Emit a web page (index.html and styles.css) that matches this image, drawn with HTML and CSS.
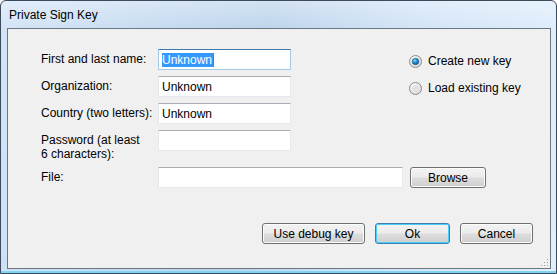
FILE: index.html
```html
<!DOCTYPE html>
<html>
<head>
  <meta charset="UTF-8">
  <title>Private Sign Key</title>
  <link rel="stylesheet" href="styles.css">
</head>
<body>
  <div class="window">
    <div class="titlebar"><span class="title">Private Sign Key</span></div>
    <div class="client">
      <div class="form">
        <div class="lbl">First and last name:</div>
        <div class="textbox focus"><span class="sel">Unknown</span></div>
        <div></div>
        <label class="radio">
          <svg width="13" height="13" viewBox="0 0 13 13">
            <defs>
              <radialGradient id="ring" cx="0.35" cy="0.3" r="0.8">
                <stop offset="0" stop-color="#ffffff"/>
                <stop offset="1" stop-color="#d6d6d6"/>
              </radialGradient>
              <radialGradient id="dot" cx="0.4" cy="0.35" r="0.7">
                <stop offset="0" stop-color="#8fd4ff"/>
                <stop offset="0.5" stop-color="#1b8ad0"/>
                <stop offset="1" stop-color="#0a4f8a"/>
              </radialGradient>
            </defs>
            <circle cx="6.5" cy="6.5" r="6" fill="url(#ring)" stroke="#8a8a8a"/>
            <circle cx="6.5" cy="6.5" r="3.3" fill="url(#dot)" stroke="#2a5d86" stroke-width="0.6"/>
          </svg>
          <span>Create new key</span>
        </label>

        <div class="lbl">Organization:</div>
        <div class="textbox">Unknown</div>
        <div></div>
        <label class="radio">
          <svg width="13" height="13" viewBox="0 0 13 13">
            <circle cx="6.5" cy="6.5" r="6" fill="url(#ring)" stroke="#8a8a8a"/>
            <circle cx="6.5" cy="6.5" r="3.5" fill="#e2e2e2"/>
          </svg>
          <span>Load existing key</span>
        </label>

        <div class="lbl">Country (two letters):</div>
        <div class="textbox">Unknown</div>
        <div></div>
        <div></div>

        <div class="lbl">Password (at least<br>6 characters):</div>
        <div class="textbox"></div>
        <div></div>
        <div></div>

        <div class="lbl">File:</div>
        <div class="textbox wide"></div>
        <div></div>
        <div><button class="btn browse">Browse</button></div>
      </div>

      <div class="actions">
        <button class="btn debug">Use debug key</button>
        <button class="btn ok">Ok</button>
        <button class="btn cancel">Cancel</button>
      </div>

      <svg class="grip" width="10" height="10" viewBox="0 0 10 10">
        <rect x="8" y="2" width="1" height="1" fill="#a0a0a0"/>
        <rect x="5" y="5" width="1" height="1" fill="#a0a0a0"/>
        <rect x="8" y="5" width="1" height="1" fill="#a0a0a0"/>
        <rect x="2" y="8" width="1" height="1" fill="#a0a0a0"/>
        <rect x="5" y="8" width="1" height="1" fill="#a0a0a0"/>
        <rect x="8" y="8" width="1" height="1" fill="#a0a0a0"/>
      </svg>
    </div>
  </div>
</body>
</html>
```

FILE: styles.css
```css
:root {
  --client-bg: #f0f0f0; --frame-dark: #3c4b5c; --text: #000000;
  --field-border: #abadb3; --field-edge: #e3e9ef;
}
html, body { margin: 0; padding: 0; }
body {
  width: 557px; height: 274px; overflow: hidden; background: #ffffff;
  font-family: "Liberation Sans", Arial, sans-serif; font-size: 12px; color: var(--text);
}
.window {
  box-sizing: border-box; width: 557px; height: 274px; display: flex; flex-direction: column;
  border: 1px solid var(--frame-dark); border-radius: 6px 6px 0 0;
  background:
    linear-gradient(180deg, rgba(255,255,255,0.35) 0, rgba(255,255,255,0) 30px),
    linear-gradient(100deg, #d3e4f6 0%, #c5dbf1 25%, #bcd3ec 45%, #d2e4f7 70%, #e1eefb 100%);
  box-shadow: inset 0 -2px 0 #7fd3f3;
}
.titlebar { height: 27px; display: flex; align-items: center; padding-left: 8px; }
.title { font-size: 12px; color: #000; padding-top: 1px; }
.client {
  position: relative; flex: 1; display: flex; flex-direction: column;
  margin: 0 5px 4px 6px; background: var(--client-bg); border: 1px solid #6d7782;
}
.form {
  display: grid; grid-template-columns: 117px 245px 6px 1fr;
  grid-template-rows: 21px 21px 21px 31px 21px; row-gap: 6px;
  padding: 20px 0 0 33px;
}
.lbl { line-height: 14px; padding-top: 3px; white-space: nowrap; }
.textbox {
  box-sizing: border-box; width: 133px; height: 21px; padding: 1px 3px 0; line-height: 18px;
  background: #ffffff; border: 1px solid var(--field-edge); border-top-color: var(--field-border);
}
.textbox.wide { width: 245px; }
.textbox.focus { border-color: #a4c9e3; border-top-color: #3d7bad; }
.sel { background: #3399ff; color: #ffffff; padding-right: 1px; border-right: 1px solid #c0601a; }
.radio { display: flex; align-items: center; gap: 6px; height: 21px; padding-top: 3px; box-sizing: border-box; }
.radio svg { flex-shrink: 0; }
.actions {
  display: flex; justify-content: flex-end; gap: 10px;
  margin-top: auto; padding: 0 17px 24px 0;
}
.btn {
  box-sizing: border-box; height: 21px; padding: 0; margin: 0;
  font-family: "Liberation Sans", Arial, sans-serif; font-size: 12px; color: #000;
  border: 1px solid #707070; border-radius: 3px;
  background: linear-gradient(180deg, #f3f3f3 0%, #ebebeb 48%, #dddddd 52%, #cfcfcf 100%);
  box-shadow: inset 0 0 0 1px #fcfcfc;
}
.browse { width: 76px; margin-left: 1px; }
.debug { width: 103px; }
.ok { width: 75px; border-color: #3c7fb1; box-shadow: inset 0 0 0 1px #48d0fa; }
.cancel { width: 73px; }
.grip { position: absolute; right: 1px; bottom: 1px; }
```
